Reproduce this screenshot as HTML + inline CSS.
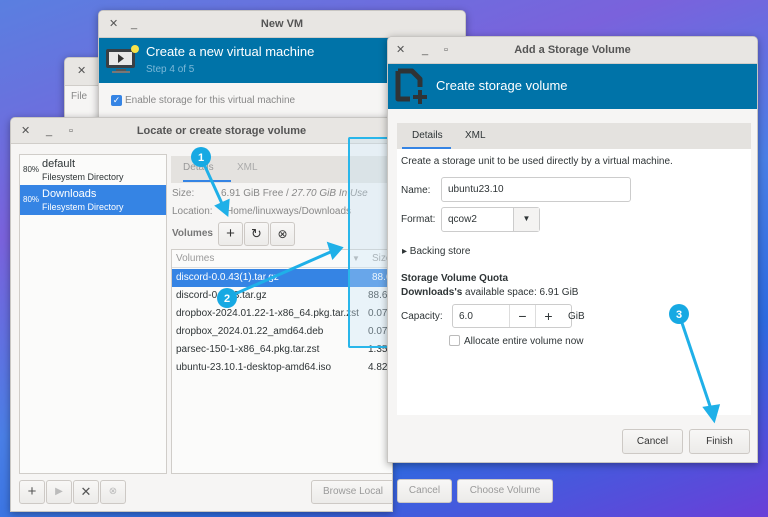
<!DOCTYPE html>
<html><head><meta charset="utf-8">
<style>
*{box-sizing:border-box;margin:0;padding:0}
body{width:768px;height:517px;overflow:hidden;position:relative;font-family:"Liberation Sans","DejaVu Sans",sans-serif;font-size:10px;color:#2e3436;
background:linear-gradient(160deg,#5a7fe0 0%,#7a62dc 30%,#4a7fe6 55%,#2d6be0 75%,#6a3fd8 100%);}
.abs{position:absolute}
.win{position:absolute;background:#f6f5f4;border:1px solid #c8c6c3;border-radius:5px 5px 0 0;box-shadow:0 2px 8px rgba(0,0,0,.35);overflow:hidden}
.tb{position:absolute;left:0;right:0;top:0;height:27px;background:#e8e6e3;border-bottom:1px solid #d0cdc9;font-weight:bold;color:#555;font-size:11px;text-align:center;line-height:27px}
.tbb{position:absolute;top:0;line-height:27px;color:#555;font-size:11px;font-weight:normal}
.hdr{position:absolute;left:0;right:0;background:#0073a8;color:#fff}
.btn{position:absolute;background:linear-gradient(#f8f7f6,#ecebe9);border:1px solid #cdc9c5;border-radius:3px;text-align:center;color:#333;font-size:10px}
.row{position:absolute;left:0;height:18px;line-height:18px;padding-left:4px;white-space:nowrap}
.dis{color:#9a9a9a}
</style></head><body>

<!-- small window behind -->
<div class="win" style="left:64px;top:57px;width:60px;height:70px;">
 <div class="tb" style="height:28px;"><span class="tbb" style="left:12px;">✕</span></div>
 <div class="abs" style="left:6px;top:33px;color:#888;">File</div>
</div>

<!-- New VM -->
<div class="win" style="left:98px;top:10px;width:368px;height:120px;">
 <div class="tb">New VM<span class="tbb" style="left:10px;">✕</span><span class="tbb" style="left:32px;">_</span></div>
 <div class="hdr" style="top:27px;height:45px;">
  <svg class="abs" style="left:6px;top:6px" width="34" height="32" viewBox="0 0 34 32"><rect x="1" y="5" width="29" height="19" rx="2" fill="#3a3f44"/><rect x="4" y="8" width="23" height="13" fill="#e8e8e8"/><path d="M13 10l6 4.5-6 4.5z" fill="#333"/><rect x="11" y="25" width="10" height="2" fill="#555"/><rect x="7" y="27" width="18" height="2" fill="#777"/><circle cx="30" cy="5" r="4" fill="#f7e34a"/></svg>
  <div class="abs" style="left:47px;top:6px;font-size:13px;">Create a new virtual machine</div>
  <div class="abs" style="left:47px;top:26px;font-size:10px;color:#7bb8d8;">Step 4 of 5</div>
 </div>
 <div class="abs" style="left:12px;top:84px;width:11px;height:11px;background:#3584e4;border-radius:2px;color:#fff;font-size:9px;line-height:11px;text-align:center">✓</div>
 <div class="abs" style="left:26px;top:84px;color:#888;font-size:10px;">Enable storage for this virtual machine</div>
</div>

<!-- Locate window -->
<div class="win" style="left:10px;top:117px;width:383px;height:395px;">
 <div class="tb" style="height:26px;line-height:26px;padding-left:40px">Locate or create storage volume<span class="tbb" style="left:10px;line-height:26px">✕</span><span class="tbb" style="left:35px;line-height:26px">_</span><span class="tbb" style="left:58px;line-height:26px">▫</span></div>
 <div class="abs" style="left:8px;top:36px;width:148px;height:320px;background:#fbfbfa;border:1px solid #d0cdc9;">
  <div class="abs" style="left:0;top:0;width:146px;height:30px;">
   <div class="abs" style="left:3px;top:10px;font-size:8px">80%</div>
   <div class="abs" style="left:22px;top:3px;font-size:11px">default</div>
   <div class="abs" style="left:22px;top:17px;font-size:9px">Filesystem Directory</div>
  </div>
  <div class="abs" style="left:0;top:30px;width:146px;height:30px;background:#3584e4;color:#fff">
   <div class="abs" style="left:3px;top:10px;font-size:8px">80%</div>
   <div class="abs" style="left:22px;top:3px;font-size:11px">Downloads</div>
   <div class="abs" style="left:22px;top:17px;font-size:9px">Filesystem Directory</div>
  </div>
 </div>
 <div class="abs" style="left:160px;top:38px;width:230px;height:27px;background:#e4e2df"></div>
 <div class="abs" style="left:172px;top:44px;color:#999;font-size:10px">Details</div>
 <div class="abs" style="left:172px;top:62px;width:48px;height:2px;background:#3584e4"></div>
 <div class="abs" style="left:226px;top:44px;color:#aaa;font-size:10px">XML</div>
 <div class="abs" style="left:161px;top:70px;color:#888">Size:</div>
 <div class="abs" style="left:210px;top:70px;color:#888">6.91 GiB Free / <i>27.70 GiB In Use</i></div>
 <div class="abs" style="left:161px;top:88px;color:#888">Location:</div>
 <div class="abs" style="left:215px;top:88px;color:#888">Home/linuxways/Downloads</div>
 <div class="abs" style="left:161px;top:110px;color:#777;font-weight:bold">Volumes</div>
 <div class="btn" style="left:207px;top:104px;width:25px;height:24px;line-height:22px;font-size:15px">+</div>
 <div class="btn" style="left:233px;top:104px;width:25px;height:24px;line-height:22px;font-size:13px">↻</div>
 <div class="btn" style="left:259px;top:104px;width:25px;height:24px;line-height:22px;font-size:12px">⊗</div>
 <div class="abs" style="left:160px;top:131px;width:230px;height:225px;background:#fbfbfa;border:1px solid #d0cdc9;overflow:hidden">
  <div class="row dis" style="top:0;width:230px;border-bottom:1px solid #ddd;">Volumes<span class="abs" style="left:180px;color:#aaa;font-size:8px">▼</span><span class="abs" style="left:200px">Size</span></div>
  <div class="row" style="top:19px;width:230px;background:#3584e4;color:#fff">discord-0.0.43(1).tar.gz<span class="abs" style="left:200px">88.6</span></div>
  <div class="row" style="top:37px">discord-0.0.43.tar.gz<span class="abs" style="left:196px">88.6</span></div>
  <div class="row" style="top:55px">dropbox-2024.01.22-1-x86_64.pkg.tar.zst<span class="abs" style="left:196px">0.07</span></div>
  <div class="row" style="top:73px">dropbox_2024.01.22_amd64.deb<span class="abs" style="left:196px">0.07</span></div>
  <div class="row" style="top:91px">parsec-150-1-x86_64.pkg.tar.zst<span class="abs" style="left:196px">1.35</span></div>
  <div class="row" style="top:109px">ubuntu-23.10.1-desktop-amd64.iso<span class="abs" style="left:196px">4.82</span></div>
 </div>
 <div class="btn" style="left:8px;top:362px;width:26px;height:24px;line-height:22px;font-size:15px;color:#555">+</div>
 <div class="btn" style="left:35px;top:362px;width:26px;height:24px;line-height:22px;color:#bbb">▶</div>
 <div class="btn" style="left:62px;top:362px;width:26px;height:24px;line-height:22px;font-size:13px;color:#555">✕</div>
 <div class="btn" style="left:89px;top:362px;width:26px;height:24px;line-height:22px;color:#bbb">⊗</div>
 <div class="btn dis" style="left:300px;top:362px;width:84px;height:24px;line-height:22px">Browse Local</div>
</div>
<div class="btn dis" style="left:397px;top:479px;width:55px;height:24px;line-height:22px">Cancel</div>
<div class="btn dis" style="left:457px;top:479px;width:96px;height:24px;line-height:22px">Choose Volume</div>

<!-- highlight rect -->
<div class="abs" style="left:348px;top:137px;width:48px;height:211px;border:2px solid #29b6ea;border-right:none;background:rgba(200,230,245,.35);border-radius:2px"></div>

<!-- Add a Storage Volume -->
<div class="win" style="left:387px;top:36px;width:371px;height:427px;border-radius:5px 5px 0 0;">
 <div class="tb">Add a Storage Volume<span class="tbb" style="left:8px;">✕</span><span class="tbb" style="left:34px;">_</span><span class="tbb" style="left:56px;">▫</span></div>
 <div class="hdr" style="top:27px;height:45px;">
  <svg class="abs" style="left:6px;top:4px" width="36" height="38" viewBox="0 0 36 38"><path d="M4 3h14l8 8v8M4 3v28h12" fill="none" stroke="#2f3336" stroke-width="5" stroke-linejoin="round"/><path d="M26 22v14M19 29h14" stroke="#2f3336" stroke-width="4"/></svg>
  <div class="abs" style="left:48px;top:14px;font-size:13px;">Create storage volume</div>
 </div>
 <div class="abs" style="left:9px;top:86px;width:354px;height:26px;background:#e4e2df"></div>
 <div class="abs" style="left:24px;top:93px;font-size:10px">Details</div>
 <div class="abs" style="left:14px;top:110px;width:49px;height:2px;background:#3584e4"></div>
 <div class="abs" style="left:77px;top:93px;font-size:10px">XML</div>
 <div class="abs" style="left:9px;top:112px;width:354px;height:266px;background:#fff"></div>
 <div class="abs" style="left:13px;top:119px">Create a storage unit to be used directly by a virtual machine.</div>
 <div class="abs" style="left:13px;top:148px">Name:</div>
 <div class="abs" style="left:53px;top:140px;width:190px;height:25px;border:1px solid #ccc;border-radius:3px;background:#fff;padding:6px 6px;font-size:10px">ubuntu23.10</div>
 <div class="abs" style="left:13px;top:177px">Format:</div>
 <div class="abs" style="left:53px;top:170px;width:99px;height:25px;border:1px solid #ccc;border-radius:3px;background:#fff;padding:6px 6px;font-size:10px">qcow2</div>
 <div class="abs" style="left:125px;top:171px;width:26px;height:23px;border-left:1px solid #ccc;background:#f4f3f2;text-align:center;line-height:22px;font-size:8px">▼</div>
 <div class="abs" style="left:14px;top:209px">▸ Backing store</div>
 <div class="abs" style="left:13px;top:236px;font-weight:bold">Storage Volume Quota</div>
 <div class="abs" style="left:13px;top:250px"><b>Downloads's</b> available space: 6.91 GiB</div>
 <div class="abs" style="left:13px;top:274px">Capacity:</div>
 <div class="abs" style="left:64px;top:267px;width:120px;height:24px;border:1px solid #ccc;border-radius:3px;background:#fff;"></div>
 <div class="abs" style="left:71px;top:274px">6.0</div>
 <div class="abs" style="left:121px;top:268px;width:26px;height:22px;border-left:1px solid #ddd;text-align:center;line-height:22px;font-size:14px">−</div>
 <div class="abs" style="left:147px;top:268px;width:26px;height:22px;border-left:1px solid #ddd;text-align:center;line-height:22px;font-size:14px">+</div>
 <div class="abs" style="left:180px;top:274px">GiB</div>
 <div class="abs" style="left:61px;top:298px;width:11px;height:11px;border:1px solid #bbb;border-radius:2px;background:#fff"></div>
 <div class="abs" style="left:76px;top:299px">Allocate entire volume now</div>
 <div class="btn" style="left:234px;top:392px;width:61px;height:25px;line-height:23px">Cancel</div>
 <div class="btn" style="left:301px;top:392px;width:61px;height:25px;line-height:23px">Finish</div>
</div>

<!-- arrows -->
<svg class="abs" style="left:0;top:0" width="768" height="517" viewBox="0 0 768 517">
 <g stroke="#1fb0e8" stroke-width="3" fill="#1fb0e8" stroke-linecap="round">
  <line x1="203" y1="162" x2="224" y2="208"/><path d="M217 206l10 8 1-13z"/>
  <line x1="228" y1="297" x2="335" y2="250"/><path d="M329 244l12 4-8 9z"/>
  <line x1="680" y1="317" x2="712" y2="412"/><path d="M705 408l9 12 4-14z"/>
 </g>
 <g font-family="Liberation Sans, sans-serif" font-size="11" font-weight="bold" fill="#fff" text-anchor="middle">
  <circle cx="201" cy="157" r="10" fill="#17a9e3"/><text x="201" y="161">1</text>
  <circle cx="227" cy="298" r="10" fill="#17a9e3"/><text x="227" y="302">2</text>
  <circle cx="679" cy="314" r="10" fill="#17a9e3"/><text x="679" y="318">3</text>
 </g>
</svg>
</body></html>
